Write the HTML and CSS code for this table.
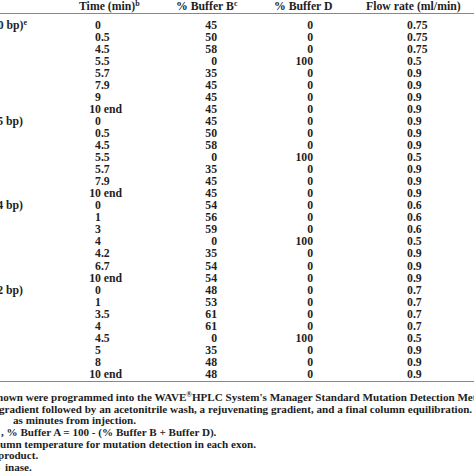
FILE: index.html
```html
<!DOCTYPE html>
<html>
<head>
<meta charset="utf-8">
<link rel="stylesheet" href="styles.css">
</head>
<body>
<div class="page">
  <div class="table">
    <div class="thead grid">
      <div class="c0"></div>
      <div class="c1 h">Time (min)<sup>b</sup></div>
      <div class="c2 h">% Buffer B<sup>c</sup></div>
      <div class="c3 h">% Buffer D</div>
      <div class="c4 h">Flow rate (ml/min)</div>
    </div>
    <div class="tbody grid">
      <div class="c0 lab"><span>Exon 2 (250 bp)<sup class="lsup">e</sup></span></div><div class="c1 t">0</div><div class="c2 n">45</div><div class="c3 n">0</div><div class="c4 f">0.75</div>
      <div class="c0"></div><div class="c1 t">0.5</div><div class="c2 n">50</div><div class="c3 n">0</div><div class="c4 f">0.75</div>
      <div class="c0"></div><div class="c1 t">4.5</div><div class="c2 n">58</div><div class="c3 n">0</div><div class="c4 f">0.75</div>
      <div class="c0"></div><div class="c1 t">5.5</div><div class="c2 n">0</div><div class="c3 n">100</div><div class="c4 f">0.5</div>
      <div class="c0"></div><div class="c1 t">5.7</div><div class="c2 n">35</div><div class="c3 n">0</div><div class="c4 f">0.9</div>
      <div class="c0"></div><div class="c1 t">7.9</div><div class="c2 n">45</div><div class="c3 n">0</div><div class="c4 f">0.9</div>
      <div class="c0"></div><div class="c1 t">9</div><div class="c2 n">45</div><div class="c3 n">0</div><div class="c4 f">0.9</div>
      <div class="c0"></div><div class="c1 t"><span class="tens">10 end</span></div><div class="c2 n">45</div><div class="c3 n">0</div><div class="c4 f">0.9</div>

      <div class="c0 lab"><span>Exon 3 (205 bp)</span></div><div class="c1 t">0</div><div class="c2 n">45</div><div class="c3 n">0</div><div class="c4 f">0.9</div>
      <div class="c0"></div><div class="c1 t">0.5</div><div class="c2 n">50</div><div class="c3 n">0</div><div class="c4 f">0.9</div>
      <div class="c0"></div><div class="c1 t">4.5</div><div class="c2 n">58</div><div class="c3 n">0</div><div class="c4 f">0.9</div>
      <div class="c0"></div><div class="c1 t">5.5</div><div class="c2 n">0</div><div class="c3 n">100</div><div class="c4 f">0.5</div>
      <div class="c0"></div><div class="c1 t">5.7</div><div class="c2 n">35</div><div class="c3 n">0</div><div class="c4 f">0.9</div>
      <div class="c0"></div><div class="c1 t">7.9</div><div class="c2 n">45</div><div class="c3 n">0</div><div class="c4 f">0.9</div>
      <div class="c0"></div><div class="c1 t"><span class="tens">10 end</span></div><div class="c2 n">45</div><div class="c3 n">0</div><div class="c4 f">0.9</div>

      <div class="c0 lab"><span>Exon 4 (184 bp)</span></div><div class="c1 t">0</div><div class="c2 n">54</div><div class="c3 n">0</div><div class="c4 f">0.6</div>
      <div class="c0"></div><div class="c1 t">1</div><div class="c2 n">56</div><div class="c3 n">0</div><div class="c4 f">0.6</div>
      <div class="c0"></div><div class="c1 t">3</div><div class="c2 n">59</div><div class="c3 n">0</div><div class="c4 f">0.6</div>
      <div class="c0"></div><div class="c1 t">4</div><div class="c2 n">0</div><div class="c3 n">100</div><div class="c4 f">0.5</div>
      <div class="c0"></div><div class="c1 t">4.2</div><div class="c2 n">35</div><div class="c3 n">0</div><div class="c4 f">0.9</div>
      <div class="c0"></div><div class="c1 t">6.7</div><div class="c2 n">54</div><div class="c3 n">0</div><div class="c4 f">0.9</div>
      <div class="c0"></div><div class="c1 t"><span class="tens">10 end</span></div><div class="c2 n">54</div><div class="c3 n">0</div><div class="c4 f">0.9</div>

      <div class="c0 lab"><span>Exon 5 (222 bp)</span></div><div class="c1 t">0</div><div class="c2 n">48</div><div class="c3 n">0</div><div class="c4 f">0.7</div>
      <div class="c0"></div><div class="c1 t">1</div><div class="c2 n">53</div><div class="c3 n">0</div><div class="c4 f">0.7</div>
      <div class="c0"></div><div class="c1 t">3.5</div><div class="c2 n">61</div><div class="c3 n">0</div><div class="c4 f">0.7</div>
      <div class="c0"></div><div class="c1 t">4</div><div class="c2 n">61</div><div class="c3 n">0</div><div class="c4 f">0.7</div>
      <div class="c0"></div><div class="c1 t">4.5</div><div class="c2 n">0</div><div class="c3 n">100</div><div class="c4 f">0.5</div>
      <div class="c0"></div><div class="c1 t">5</div><div class="c2 n">35</div><div class="c3 n">0</div><div class="c4 f">0.9</div>
      <div class="c0"></div><div class="c1 t">8</div><div class="c2 n">48</div><div class="c3 n">0</div><div class="c4 f">0.9</div>
      <div class="c0"></div><div class="c1 t"><span class="tens">10 end</span></div><div class="c2 n">48</div><div class="c3 n">0</div><div class="c4 f">0.9</div>
    </div>
  </div>
  <div class="notes">
    <div class="ln l1">hown were programmed into the WAVE<sup>®</sup>HPLC System's Manager Standard Mutation Detection Method</div>
    <div class="ln l2">gradient followed by an acetonitrile wash, a rejuvenating gradient, and a final column equilibration.</div>
    <div class="ln l3">as minutes from injection.</div>
    <div class="ln l4">, % Buffer A = 100 - (% Buffer B + Buffer D).</div>
    <div class="ln l5">umn temperature for mutation detection in each exon.</div>
    <div class="ln l6">product.</div>
    <div class="ln l7">inase.</div>
  </div>
</div>
</body>
</html>
```

FILE: styles.css
```css
html, body {
  margin: 0;
  padding: 0;
  background: #ffffff;
}
body {
  width: 474px;
  height: 474px;
  overflow: hidden;
}
.page {
  width: 474px;
  padding-top: 1px;
  font-family: "Liberation Serif", "Times New Roman", serif;
  font-weight: bold;
  color: #1e1e1e;
  white-space: nowrap;
  overflow: hidden;
}
.grid {
  display: grid;
  grid-template-columns: 23px 137px 80px 100px 134px;
}
.thead {
  font-size: 11.75px;
  line-height: 12px;
  border-bottom: 1.5px solid #888888;
}
.tbody {
  font-size: 11.75px;
  line-height: 12.03px;
  grid-auto-rows: 12.03px;
  padding-top: 6.2px;
  padding-bottom: 0.5px;
  border-bottom: 1.5px solid #888888;
}
sup {
  font-size: 0.68em;
  line-height: 0;
  vertical-align: 0.5em;
}
.c1.h { padding-left: 56px; }
.c2.h { padding-left: 16px; }
.c3.h { padding-left: 34px; }
.c4.h { padding-left: 26px; }

.lab {
  display: flex;
  justify-content: flex-end;
}
.lsup {
  margin-right: -4px;
}
.t { padding-left: 72px; }
.tens { margin-left: -0.5em; }
.n { text-align: right; }
.c2.n { padding-right: 23px; }
.c3.n { padding-right: 27px; }
.f { padding-left: 67px; }

.notes {
  margin-top: 9.7px;
  font-size: 11.1px;
  line-height: 11.7px;
}
.l1 { margin-left: -3px; }
.l2 { margin-left: -1px; }
.l3 { margin-left: 13px; }
.l4 { margin-left: 1px; }
.l5 { margin-left: 0; }
.l6 { margin-left: -2px; }
.l7 { margin-left: 5px; }
```
